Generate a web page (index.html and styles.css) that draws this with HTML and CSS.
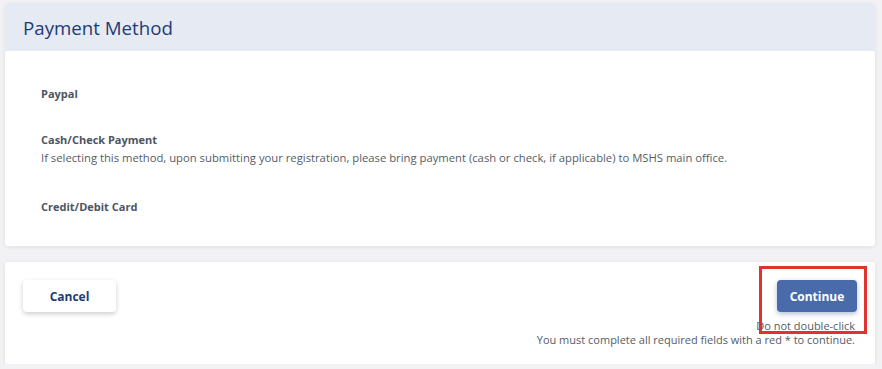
FILE: index.html
```html
<!DOCTYPE html>
<html>
<head>
<meta charset="utf-8">
<link rel="stylesheet" href="styles.css">
</head>
<body>
<div class="page">
  <section class="card">
    <header class="card-header">
      <h1 class="card-title">Payment Method</h1>
    </header>
    <div class="card-body">
      <div class="option">
        <div class="option-label">Paypal</div>
      </div>
      <div class="option">
        <div class="option-label">Cash/Check Payment</div>
        <div class="option-desc">If selecting this method, upon submitting your registration, please bring payment (cash or check, if applicable) to MSHS main office.</div>
      </div>
      <div class="option">
        <div class="option-label">Credit/Debit Card</div>
      </div>
    </div>
  </section>
  <section class="card actions">
    <div class="actions-left">
      <button class="btn btn-cancel">Cancel</button>
    </div>
    <div class="actions-right">
      <div class="continue-wrap">
        <div class="highlight"></div>
        <button class="btn btn-continue">Continue</button>
      </div>
      <div class="note">Do not double-click</div>
      <div class="note">You must complete all required fields with a red * to continue.</div>
    </div>
  </section>
</div>
</body>
</html>
```
FILE: styles.css
```css
html, body {
  margin: 0;
  padding: 0;
}
body {
  background: #f2f2f4;
  font-family: "Open Sans", "Liberation Sans", sans-serif;
  color: #4a5160;
}
.page {
  padding: 3px 7px 0 5px;
  display: flex;
  flex-direction: column;
  gap: 16px;
}
.card {
  background: #fff;
  border-radius: 3px;
  box-shadow: 0 1px 4px rgba(0,0,0,0.08);
}
.card-header {
  background: #e6eaf3;
  height: 48px;
  display: flex;
  align-items: center;
  padding-left: 18px;
  border-radius: 3px 3px 0 0;
}
.card-title {
  margin: 0;
  font-size: 18.7px;
  font-weight: 400;
  color: #1f3b75;
}
.card-body {
  padding: 35px 36px 31px;
  display: flex;
  flex-direction: column;
  gap: 30px;
}
.option-label {
  font-size: 11px;
  font-weight: 700;
  color: #4d5562;
  line-height: 16px;
}
.option-desc {
  font-size: 11.28px;
  color: #555c68;
  line-height: 16px;
  margin-top: 2px;
  margin-bottom: 3px;
}
.actions {
  display: flex;
  justify-content: space-between;
  padding: 18px 18px 8px 18px;
  height: 76px;
}
.actions-right {
  display: flex;
  flex-direction: column;
  align-items: flex-end;
}
.continue-wrap {
  position: relative;
  margin-bottom: 7px;
}
.btn {
  border: none;
  border-radius: 4px;
  font-family: inherit;
  font-size: 12px;
  font-weight: 700;
  height: 32px;
  cursor: pointer;
  display: block;
}
.btn-cancel {
  width: 93px;
  background: #fff;
  color: #1f3b75;
  box-shadow: 0 2px 5px rgba(0,0,0,0.2);
}
.btn-continue {
  width: 80px;
  background: #4a6ba9;
  color: #fff;
  box-shadow: 0 2px 5px rgba(40,70,140,0.35);
}
.note {
  font-size: 11px;
  line-height: 14px;
  color: #555c68;
  padding-right: 2px;
}
.highlight {
  position: absolute;
  left: -18px;
  top: -14px;
  right: -10px;
  bottom: -22px;
  border: 3px solid #e0332d;
  pointer-events: none;
  z-index: 2;
}
```
